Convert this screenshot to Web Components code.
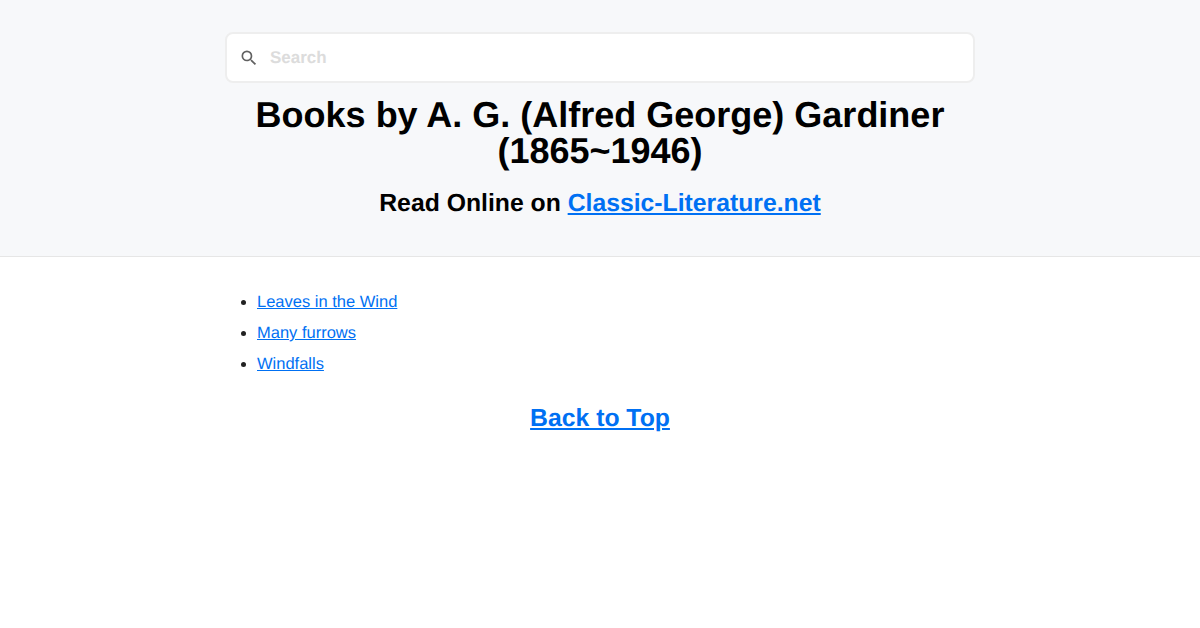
<!DOCTYPE html>
<html lang="en">
<head>
<meta charset="utf-8">
<title>Books by A. G. (Alfred George) Gardiner</title>
<style>
  html, body { margin: 0; padding: 0; background: #fff; }
  body { font-family: "Liberation Sans", Arial, sans-serif; color: #000; text-rendering: geometricPrecision; }
</style>
</head>
<body>
<page-header>
  <search-box slot="search" placeholder="Search"></search-box>
  <span slot="title">Books by A. G. (Alfred George) Gardiner (1865~1946)</span>
  <span slot="subtitle">Read Online on <a href="#" style="color:#0070f3">Classic-Literature.net</a></span>
</page-header>
<book-list>
  <a href="#">Leaves in the Wind</a>
  <a href="#">Many furrows</a>
  <a href="#">Windfalls</a>
</book-list>
<back-to-top></back-to-top>

<script>
class SearchBox extends HTMLElement {
  constructor() {
    super();
    this.attachShadow({mode: "open"});
    this.shadowRoot.innerHTML = `
      <style>
        :host { display: block; }
        .box {
          display: flex;
          align-items: center;
          box-sizing: border-box;
          height: 51px;
          background: #fff;
          border: 2px solid #eeeeee;
          border-radius: 8px;
          padding-left: 11.5px;
        }
        svg { width: 20px; height: 20px; fill: #616161; flex: none; }
        input {
          flex: 1;
          min-width: 0;
          border: 0;
          outline: 0;
          background: transparent;
          margin-left: 11.5px;
          padding: 0;
          text-rendering: geometricPrecision;
          font: bold 17px "Liberation Sans", Arial, sans-serif;
        }
        input::placeholder { color: #dcdcdc; opacity: 1; }
      </style>
      <div class="box">
        <svg viewBox="0 0 24 24"><path d="M15.5 14h-.79l-.28-.27A6.47 6.47 0 0 0 16 9.5 6.5 6.5 0 1 0 9.5 16c1.61 0 3.09-.59 4.23-1.57l.27.28v.79l5 4.99L20.49 19l-4.99-5zm-6 0C7.01 14 5 11.99 5 9.5S7.01 5 9.5 5 14 7.01 14 9.5 11.99 14 9.5 14z"/></svg>
        <input type="text">
      </div>
    `;
    this.shadowRoot.querySelector("input").placeholder = this.getAttribute("placeholder");
  }
}

class PageHeader extends HTMLElement {
  constructor() {
    super();
    this.attachShadow({mode: "open"});
    this.shadowRoot.innerHTML = `
      <style>
        :host {
          display: block;
          box-sizing: border-box;
          height: 257px;
          background: #f7f8fa;
          border-bottom: 1px solid #e6e6e6;
          padding-top: 32px;
        }
        .inner { width: 750px; margin: 0 auto; }
        h1 {
          margin: 14px 0 0;
          font-size: 36px;
          line-height: 36px;
          font-weight: bold;
          text-align: center;
        }
        h2 {
          margin: 19px 0 0;
          font-size: 24.75px;
          line-height: 32px;
          font-weight: bold;
          text-align: center;
        }
      </style>
      <div class="inner">
        <slot name="search"></slot>
        <h1><slot name="title"></slot></h1>
        <h2><slot name="subtitle"></slot></h2>
      </div>
    `;
  }
}

class BookList extends HTMLElement {
  constructor() {
    super();
    this.attachShadow({mode: "open"});
    this.shadowRoot.innerHTML = `
      <style>
        :host { display: block; width: 750px; margin: 0 auto; padding-top: 30px; }
        ul { margin: 0; padding: 0 0 0 32px; font-size: 16.5px; line-height: 31px; color: #222; }
        a { color: #0070f3; }
      </style>
      <ul></ul>
    `;
    const ul = this.shadowRoot.querySelector("ul");
    for (const link of this.querySelectorAll("a")) {
      const li = document.createElement("li");
      const a = document.createElement("a");
      a.href = link.getAttribute("href");
      a.textContent = link.textContent;
      li.appendChild(a);
      ul.appendChild(li);
    }
  }
}

class BackToTop extends HTMLElement {
  constructor() {
    super();
    this.attachShadow({mode: "open"});
    this.shadowRoot.innerHTML = `
      <style>
        :host { display: block; text-align: center; margin-top: 23px; font-size: 24.75px; line-height: 32px; font-weight: bold; }
        a { color: #0070f3; }
      </style>
      <a href="#">Back to Top</a>
    `;
  }
}

customElements.define("search-box", SearchBox);
customElements.define("page-header", PageHeader);
customElements.define("book-list", BookList);
customElements.define("back-to-top", BackToTop);
</script>
</body>
</html>
